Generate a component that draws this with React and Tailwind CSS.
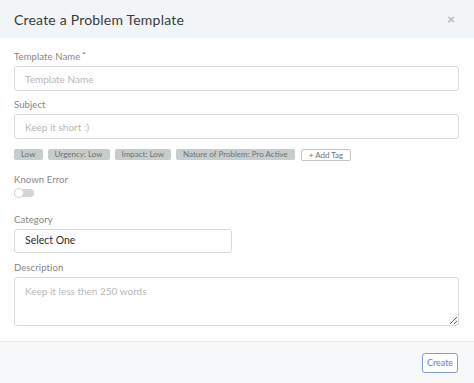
import { useState } from 'react'

const tags = ['Low', 'Urgency: Low', 'Impact: Low', 'Nature of Problem: Pro Active']

function Label({ children, required }) {
  return (
    <div className="h-[12px] text-[9.5px] leading-[12px] text-[#858585] mb-[3px] tracking-[0.1px]">
      {children}
      {required ? <span className="text-[#e0303a] ml-[2px] align-top text-[8px] leading-[8px]">*</span> : null}
    </div>
  )
}

const inputCls = 'w-full h-[25px] border border-[#d9d9d9] rounded-[3px] px-[10px] text-[10px] placeholder:text-[#b8b8b8] outline-none block'

export default function App() {
  const [known, setKnown] = useState(false)

  return (
    <div className="w-[474px] h-[383px] bg-white flex flex-col overflow-hidden" style={{ fontFamily: 'Lato, "Open Sans", sans-serif' }}>
      {/* header */}
      <div className="h-[38px] shrink-0 bg-[#f1f5f8] flex items-center justify-between pl-[14px] pr-[19px]">
        <div className="text-[14px] text-[#3a3a3a] tracking-[0.2px]">Create a Problem Template</div>
        <button type="button" className="text-[#b4b8bc] text-[14px] font-bold leading-none" aria-label="Close">×</button>
      </div>

      {/* body */}
      <div className="flex-1 pl-[14px] pr-[15px] pt-[13px]">
        <Label required>Template Name</Label>
        <input className={inputCls} placeholder="Template Name" />

        <div className="mt-[8px]">
          <Label>Subject</Label>
          <input className={inputCls} placeholder="Keep it short :)" />
        </div>

        <div className="flex items-center gap-[5px] mt-[10px] h-[11px]">
          {tags.map(t => (
            <span key={t} className="h-[11px] px-[7px] rounded-[2px] bg-[#c7cccd] text-[#6d7374] text-[8px] leading-[11px]">{t}</span>
          ))}
          <button type="button" className="ml-[1px] h-[12px] px-[7px] rounded-[2px] border border-[#c2c6c9] bg-white text-[#6d7374] text-[8px] leading-[10px]">+ Add Tag</button>
        </div>

        <div className="mt-[14px]">
          <Label>Known Error</Label>
          <button
            type="button"
            onClick={() => setKnown(!known)}
            className="relative w-[20px] h-[8px] rounded-full bg-[#d3d6d8] block mt-[1px]"
            aria-label="Known Error"
          >
            <span className="absolute left-0 top-[-1px] w-[10px] h-[10px] rounded-full bg-white border border-[#d3d6d8]" />
          </button>
        </div>

        <div className="mt-[17px]">
          <Label>Category</Label>
          <div className="w-[218px] h-[24px] border border-[#d9d9d9] rounded-[3px] px-[10px] flex items-center text-[10.5px] text-[#2e2e2e] mt-[1px]">Select One</div>
        </div>

        <div className="mt-[9px]">
          <Label>Description</Label>
          <textarea
            className="w-full h-[49px] border border-[#d9d9d9] rounded-[3px] px-[10px] py-[6px] text-[10px] placeholder:text-[#b8b8b8] outline-none block"
            placeholder="Keep it less then 250 words"
          />
        </div>
      </div>

      {/* footer */}
      <div className="h-[42px] shrink-0 bg-[#f7f8fa] border-t border-[#e8ebee] flex items-center justify-end pr-[16px]">
        <button type="button" className="h-[20px] w-[36px] rounded-[3px] border border-[#8a9ad8] bg-white text-[#6b80c8] text-[9px]">Create</button>
      </div>
    </div>
  )
}
